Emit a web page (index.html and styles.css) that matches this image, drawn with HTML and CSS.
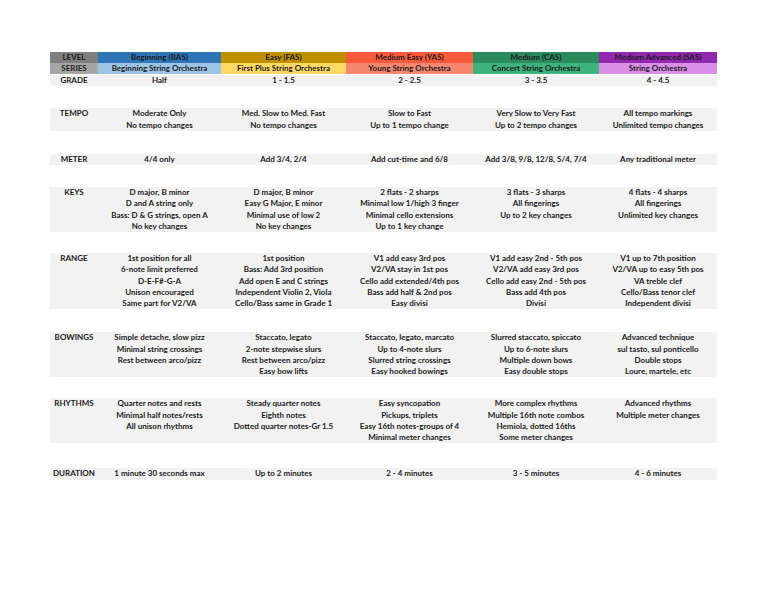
FILE: index.html
```html
<!DOCTYPE html>
<html>
<head>
<meta charset="utf-8">
<link rel="stylesheet" href="styles.css">
</head>
<body>
<div class="sheet">
  <div class="row head">
    <div class="cell lab lab-level">LEVEL</div>
    <div class="cell c1a">Beginning (BAS)</div>
    <div class="cell c2a">Easy (FAS)</div>
    <div class="cell c3a">Medium Easy (YAS)</div>
    <div class="cell c4a">Medium (CAS)</div>
    <div class="cell c5a">Medium Advanced (SAS)</div>
  </div>
  <div class="row head">
    <div class="cell lab lab-series">SERIES</div>
    <div class="cell c1b">Beginning String Orchestra</div>
    <div class="cell c2b">First Plus String Orchestra</div>
    <div class="cell c3b">Young String Orchestra</div>
    <div class="cell c4b">Concert String Orchestra</div>
    <div class="cell c5b">String Orchestra</div>
  </div>
  <div class="row band grade">
    <div class="cell lab">GRADE</div>
    <div class="cell">Half</div>
    <div class="cell">1 - 1.5</div>
    <div class="cell">2 - 2.5</div>
    <div class="cell">3 - 3.5</div>
    <div class="cell">4 - 4.5</div>
  </div>

  <div class="row band mt-22">
    <div class="cell lab">TEMPO</div>
    <div class="cell">Moderate Only<br>No tempo changes</div>
    <div class="cell">Med. Slow to Med. Fast<br>No tempo changes</div>
    <div class="cell">Slow to Fast<br>Up to 1 tempo change</div>
    <div class="cell">Very Slow to Very Fast<br>Up to 2 tempo changes</div>
    <div class="cell">All tempo markings<br>Unlimited tempo changes</div>
  </div>

  <div class="row band mt-23">
    <div class="cell lab">METER</div>
    <div class="cell">4/4 only</div>
    <div class="cell">Add 3/4, 2/4</div>
    <div class="cell">Add cut-time and 6/8</div>
    <div class="cell">Add 3/8, 9/8, 12/8, 5/4, 7/4</div>
    <div class="cell">Any traditional meter</div>
  </div>

  <div class="row band mt-22">
    <div class="cell lab">KEYS</div>
    <div class="cell">D major, B minor<br>D and A string only<br>Bass: D &amp; G strings, open A<br>No key changes</div>
    <div class="cell">D major, B minor<br>Easy G Major, E minor<br>Minimal use of low 2<br>No key changes</div>
    <div class="cell">2 flats - 2 sharps<br>Minimal low 1/high 3 finger<br>Minimal cello extensions<br>Up to 1 key change</div>
    <div class="cell">3 flats - 3 sharps<br>All fingerings<br>Up to 2 key changes</div>
    <div class="cell">4 flats - 4 sharps<br>All fingerings<br>Unlimited key changes</div>
  </div>

  <div class="row band mt-21">
    <div class="cell lab">RANGE</div>
    <div class="cell">1st position for all<br>6-note limit preferred<br>D-E-F#-G-A<br>Unison encouraged<br>Same part for V2/VA</div>
    <div class="cell">1st position<br>Bass: Add 3rd position<br>Add open E and C strings<br>Independent Violin 2, Viola<br>Cello/Bass same in Grade 1</div>
    <div class="cell">V1 add easy 3rd pos<br>V2/VA stay in 1st pos<br>Cello add extended/4th pos<br>Bass add half &amp; 2nd pos<br>Easy divisi</div>
    <div class="cell">V1 add easy 2nd - 5th pos<br>V2/VA add easy 3rd pos<br>Cello add easy 2nd - 5th pos<br>Bass add 4th pos<br>Divisi</div>
    <div class="cell">V1 up to 7th position<br>V2/VA up to easy 5th pos<br>VA treble clef<br>Cello/Bass tenor clef<br>Independent divisi</div>
  </div>

  <div class="row band mt-23">
    <div class="cell lab">BOWINGS</div>
    <div class="cell">Simple detache, slow pizz<br>Minimal string crossings<br>Rest between arco/pizz</div>
    <div class="cell">Staccato, legato<br>2-note stepwise slurs<br>Rest between arco/pizz<br>Easy bow lifts</div>
    <div class="cell">Staccato, legato, marcato<br>Up to 4-note slurs<br>Slurred string crossings<br>Easy hooked bowings</div>
    <div class="cell">Slurred staccato, spiccato<br>Up to 6-note slurs<br>Multiple down bows<br>Easy double stops</div>
    <div class="cell">Advanced technique<br>sul tasto, sul ponticello<br>Double stops<br>Loure, martele, etc</div>
  </div>

  <div class="row band mt-21">
    <div class="cell lab">RHYTHMS</div>
    <div class="cell">Quarter notes and rests<br>Minimal half notes/rests<br>All unison rhythms</div>
    <div class="cell">Steady quarter notes<br>Eighth notes<br>Dotted quarter notes-Gr 1.5</div>
    <div class="cell">Easy syncopation<br>Pickups, triplets<br>Easy 16th notes-groups of 4<br>Minimal meter changes</div>
    <div class="cell">More complex rhythms<br>Multiple 16th note combos<br>Hemiola, dotted 16ths<br>Some meter changes</div>
    <div class="cell">Advanced rhythms<br>Multiple meter changes</div>
  </div>

  <div class="row band mt-25">
    <div class="cell lab">DURATION</div>
    <div class="cell">1 minute 30 seconds max</div>
    <div class="cell">Up to 2 minutes</div>
    <div class="cell">2 - 4 minutes</div>
    <div class="cell">3 - 5 minutes</div>
    <div class="cell">4 - 6 minutes</div>
  </div>
</div>
</body>
</html>
```

FILE: styles.css
```css
html, body {
  margin: 0;
  padding: 0;
  background: #ffffff;
}

.sheet {
  padding: 52px 0 0 50px;
  width: 667px;
  font-family: Lato, "Liberation Sans", sans-serif;
  font-size: 8px;
  font-weight: 700;
  color: #1a1a1a;
}

.row {
  display: grid;
  grid-template-columns: 48px 123px 125px 127px 126px 118px;
  line-height: 11.25px;
}

.head {
  line-height: 11px;
}

.cell {
  text-align: center;
  white-space: nowrap;
}

.band {
  background: #f2f2f2;
}

.grade {
  margin-top: 1px;
}

.mt-21 { margin-top: 21px; }
.mt-22 { margin-top: 22px; }
.mt-23 { margin-top: 23px; }
.mt-25 { margin-top: 25px; }

.lab-level { background: #7f7f7f; }
.lab-series { background: #a6a6a6; }

.c1a { background: #2e75b6; }
.c1b { background: #9dc3e6; }
.c2a { background: #bf9000; }
.c2b { background: #ffd966; }
.c3a { background: #fa5a3c; }
.c3b { background: #f8876f; }
.c4a { background: #2b8a5e; }
.c4b { background: #3db47e; }
.c5a { background: #9029b0; }
.c5b { background: #d98fe6; }
```
